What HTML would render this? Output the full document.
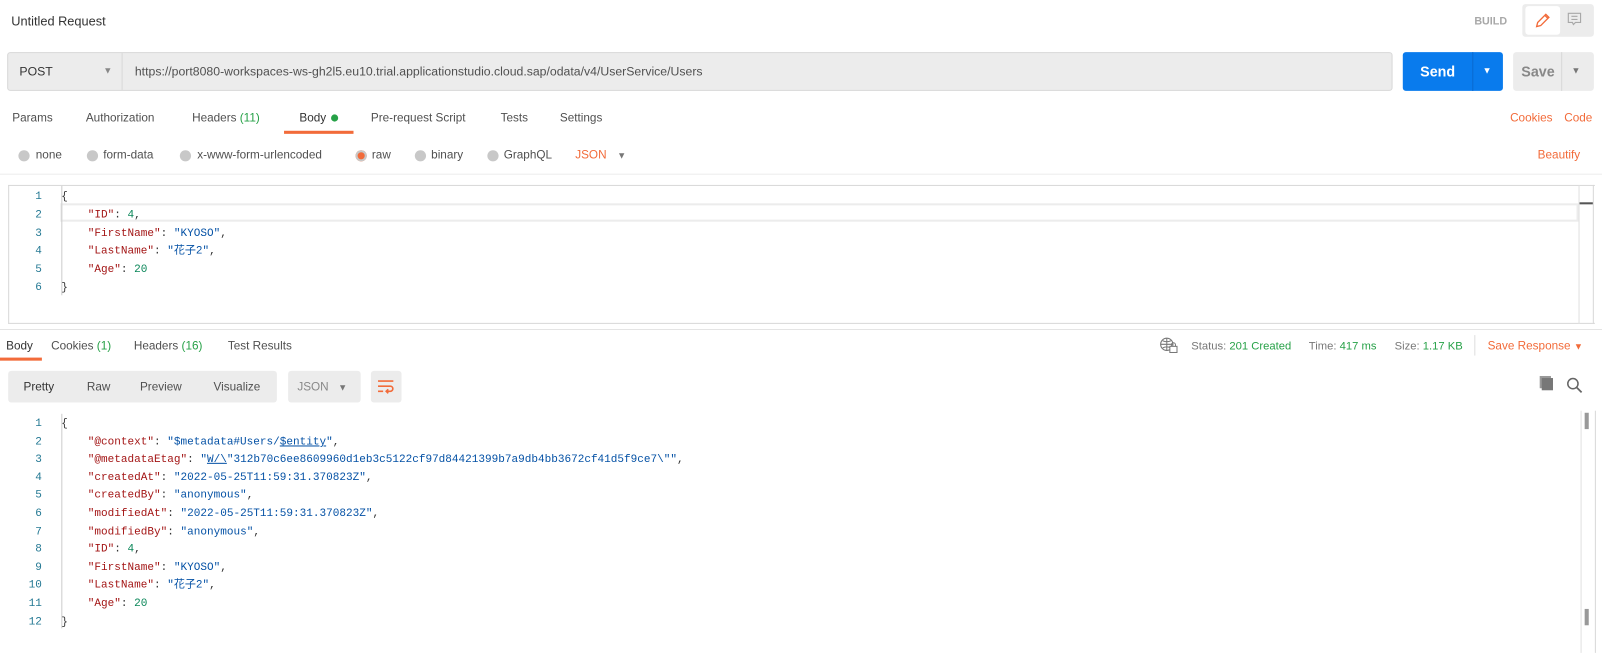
<!DOCTYPE html>
<html><head><meta charset="utf-8"><style>
*{margin:0;padding:0;box-sizing:border-box}
body{width:1602px;height:639px;background:#fff;overflow:hidden}
#w{position:relative;width:1568px;height:626px;transform:scale(1.0217);transform-origin:0 0;font-family:"Liberation Sans","Noto Sans CJK JP",sans-serif;font-size:11.5px;color:#505050}
.a{position:absolute;white-space:nowrap}
.t{margin-top:2px}
.o{color:#f26b3a}.g{color:#26a147}
.code{font-family:"Liberation Mono","Noto Sans CJK JP",monospace;font-size:10.8px;line-height:14px}
.code>div{margin-top:2px}
.ln{position:absolute;width:34px;text-align:right;color:#237893;line-height:14px}
.cl{position:absolute;left:60px;color:#333;white-space:pre;line-height:14px;height:14px}
.k{color:#a31515}.s{color:#0451a5}.n{color:#098658}
.rad{position:absolute;width:11px;height:11px;border-radius:50%;background:#c8c8c8;top:147px}
</style></head><body><div id="w">
<div class="a" style="left:11px;top:14px;font-size:12.5px;color:#333">Untitled Request</div>
<div class="a" style="left:1443px;top:15px;font-size:10.5px;font-weight:bold;color:#a8a8a8">BUILD</div>
<div class="a" style="left:1490px;top:4px;width:70px;height:32px;background:#ececec;border-radius:3px"></div>
<div class="a" style="left:1493px;top:6px;width:34px;height:28px;background:#fff;border-radius:3px"></div>
<svg class="a" style="left:1501px;top:11px" width="18" height="18" viewBox="0 0 18 18"><path d="M3 15 L4 11 L12 3 L15 6 L7 14 Z M11 4 L14 7" fill="none" stroke="#f26b3a" stroke-width="1.3"/></svg>
<svg class="a" style="left:1533px;top:11px" width="16" height="16" viewBox="0 0 16 16"><path d="M2 2h12v9H9l-2 2-1-2H2Z M5 5h6 M5 8h6" fill="none" stroke="#a8a8a8" stroke-width="1.1"/></svg>

<div class="a" style="left:7px;top:51px;width:1356px;height:38px;background:#ececec;border:1px solid #d8d8d8;border-radius:3px"></div>
<div class="a" style="left:119px;top:52px;width:1px;height:36px;background:#d8d8d8"></div>
<div class="a" style="left:19px;top:63px;font-size:12px;color:#333">POST</div>
<div class="a" style="left:101px;top:64px;font-size:9px;color:#888">▼</div>
<div class="a" style="left:132px;top:63px;font-size:12px;color:#505050">https://port8080-workspaces-ws-gh2l5.eu10.trial.applicationstudio.cloud.sap/odata/v4/UserService/Users</div>
<div class="a" style="left:1373px;top:51px;width:98px;height:38px;background:#097bed;border-radius:3px"></div>
<div class="a" style="left:1441px;top:51px;width:1px;height:38px;background:#0a6ad0"></div>
<div class="a" style="left:1390px;top:62px;font-size:14px;font-weight:bold;color:#fff">Send</div>
<div class="a" style="left:1451px;top:64px;font-size:9px;color:#fff">▼</div>
<div class="a" style="left:1481px;top:51px;width:79px;height:38px;background:#ececec;border-radius:3px"></div>
<div class="a" style="left:1528px;top:51px;width:1px;height:38px;background:#d8d8d8"></div>
<div class="a" style="left:1489px;top:62px;font-size:14px;font-weight:bold;color:#888">Save</div>
<div class="a" style="left:1538px;top:64px;font-size:9px;color:#777">▼</div>

<div class="a t" style="left:12px;top:108px">Params</div>
<div class="a t" style="left:84px;top:108px">Authorization</div>
<div class="a t" style="left:188px;top:108px">Headers <span class="g">(11)</span></div>
<div class="a t" style="left:293px;top:108px;color:#333">Body <span style="display:inline-block;width:7px;height:7px;border-radius:50%;background:#26a147;margin-left:2px"></span></div>
<div class="a" style="left:278px;top:128px;width:68px;height:3px;background:#f26b3a"></div>
<div class="a t" style="left:363px;top:108px">Pre-request Script</div>
<div class="a t" style="left:490px;top:108px">Tests</div>
<div class="a t" style="left:548px;top:108px">Settings</div>
<div class="a o t" style="left:1478px;top:108px">Cookies</div>
<div class="a o t" style="left:1531px;top:108px">Code</div>

<div class="rad" style="left:18px"></div><div class="a" style="left:35px;top:146px">none</div>
<div class="rad" style="left:85px"></div><div class="a" style="left:101px;top:146px">form-data</div>
<div class="rad" style="left:176px"></div><div class="a" style="left:193px;top:146px">x-www-form-urlencoded</div>
<div class="rad" style="left:348px;background:#f26b3a;box-shadow:inset 0 0 0 2px #c8c8c8"></div><div class="a" style="left:364px;top:146px">raw</div>
<div class="rad" style="left:406px"></div><div class="a" style="left:422px;top:146px">binary</div>
<div class="rad" style="left:477px"></div><div class="a" style="left:493px;top:146px">GraphQL</div>
<div class="a o" style="left:563px;top:146px">JSON</div>
<div class="a" style="left:604px;top:147px;font-size:9px;color:#777">▼</div>
<div class="a o" style="left:1505px;top:146px">Beautify</div>
<div class="a" style="left:0;top:170px;width:1568px;height:1px;background:#ececec"></div>

<div class="a" style="left:8px;top:181px;width:1553px;height:136px;border:1px solid #d8d8d8;border-right:none"></div>
<div class="a" style="left:1545px;top:181px;width:15px;height:136px;border-left:1px solid #e0e0e0;border-right:1px solid #d8d8d8"></div>
<div class="a" style="left:1546px;top:198px;width:13px;height:2px;background:#555"></div>
<div class="a" style="left:59px;top:199px;width:1486px;height:18px;border:2px solid #ececec"></div>
<div class="a" style="left:60px;top:182px;width:1px;height:107px;background:#ccc"></div>
<div class="code">
<div class="ln" style="left:7px;top:184px">1</div><div class="cl" style="top:184px">{</div>
<div class="ln" style="left:7px;top:202px">2</div><div class="cl" style="top:202px">    <span class="k">"ID"</span>: <span class="n">4</span>,</div>
<div class="ln" style="left:7px;top:220px">3</div><div class="cl" style="top:220px">    <span class="k">"FirstName"</span>: <span class="s">"KYOSO"</span>,</div>
<div class="ln" style="left:7px;top:237px">4</div><div class="cl" style="top:237px">    <span class="k">"LastName"</span>: <span class="s">"花子2"</span>,</div>
<div class="ln" style="left:7px;top:255px">5</div><div class="cl" style="top:255px">    <span class="k">"Age"</span>: <span class="n">20</span></div>
<div class="ln" style="left:7px;top:273px">6</div><div class="cl" style="top:273px">}</div>
</div>
<div class="a" style="left:0;top:322px;width:1568px;height:1px;background:#e4e4e4"></div>

<div class="a t" style="left:6px;top:331px;color:#333">Body</div>
<div class="a" style="left:0;top:350px;width:41px;height:3px;background:#f26b3a"></div>
<div class="a t" style="left:50px;top:331px">Cookies <span class="g">(1)</span></div>
<div class="a t" style="left:131px;top:331px">Headers <span class="g">(16)</span></div>
<div class="a t" style="left:223px;top:331px">Test Results</div>
<svg class="a" style="left:1135px;top:330px" width="18" height="16" viewBox="0 0 18 16"><circle cx="7" cy="7" r="6" fill="none" stroke="#777" stroke-width="1.1"/><path d="M1 7h12 M7 1v12 M3 3.5q4 2 8 0 M3 10.5q4-2 8 0" fill="none" stroke="#777" stroke-width="1"/><rect x="10" y="9" width="7" height="6" fill="#fff" stroke="#777"/><path d="M11.5 9V7.5a2 2 0 0 1 4 0V9" fill="none" stroke="#777"/></svg>
<div class="a" style="left:1166px;top:333px;font-size:11px;color:#777">Status: <span class="g">201 Created</span></div>
<div class="a" style="left:1281px;top:333px;font-size:11px;color:#777">Time: <span class="g">417 ms</span></div>
<div class="a" style="left:1365px;top:333px;font-size:11px;color:#777">Size: <span class="g">1.17 KB</span></div>
<div class="a" style="left:1443px;top:328px;width:1px;height:20px;background:#ddd"></div>
<div class="a o t" style="left:1456px;top:331px">Save Response <span style="font-size:9px">▼</span></div>

<div class="a" style="left:8px;top:363px;width:263px;height:31px;background:#ececec;border-radius:3px"></div>
<div class="a" style="left:23px;top:373px;color:#333">Pretty</div>
<div class="a" style="left:85px;top:373px">Raw</div>
<div class="a" style="left:137px;top:373px">Preview</div>
<div class="a" style="left:209px;top:373px">Visualize</div>
<div class="a" style="left:282px;top:363px;width:71px;height:31px;background:#ececec;border-radius:3px"></div>
<div class="a" style="left:291px;top:373px;color:#888">JSON</div>
<div class="a" style="left:331px;top:374px;font-size:9px;color:#777">▼</div>
<div class="a" style="left:363px;top:363px;width:30px;height:31px;background:#ececec;border-radius:3px"></div>
<svg class="a" style="left:369px;top:370px" width="18" height="16" viewBox="0 0 18 16"><path d="M1 3h15 M1 8h12a2.5 2.5 0 0 1 0 5H9 M11 11l-2 2 2 2 M1 13h5" fill="none" stroke="#f26b3a" stroke-width="1.6"/></svg>
<div class="a" style="left:1509px;top:370px;width:11px;height:12px;background:#777;box-shadow:-2px -2px 0 0 #999"></div>
<svg class="a" style="left:1533px;top:369px" width="16" height="16" viewBox="0 0 16 16"><circle cx="6.5" cy="6.5" r="5" fill="none" stroke="#666" stroke-width="1.5"/><path d="M10 10l5 5" stroke="#666" stroke-width="1.7"/></svg>

<div class="a" style="left:1547px;top:402px;width:15px;height:237px;border-left:1px solid #e0e0e0;border-right:1px solid #d8d8d8"></div>
<div class="a" style="left:1551px;top:404px;width:4px;height:16px;background:#999"></div>
<div class="a" style="left:1551px;top:596px;width:4px;height:16px;background:#999"></div>
<div class="a" style="left:60px;top:405px;width:1px;height:210px;background:#ccc"></div>
<div class="code">
<div class="ln" style="left:7px;top:406px">1</div><div class="cl" style="top:406px">{</div>
<div class="ln" style="left:7px;top:424px">2</div><div class="cl" style="top:424px">    <span class="k">"@context"</span>: <span class="s">"$metadata#Users/<u>$entity</u>"</span>,</div>
<div class="ln" style="left:7px;top:441px">3</div><div class="cl" style="top:441px">    <span class="k">"@metadataEtag"</span>: <span class="s">"<u>W/\</u>"312b70c6ee8609960d1eb3c5122cf97d84421399b7a9db4bb3672cf41d5f9ce7\""</span>,</div>
<div class="ln" style="left:7px;top:459px">4</div><div class="cl" style="top:459px">    <span class="k">"createdAt"</span>: <span class="s">"2022-05-25T11:59:31.370823Z"</span>,</div>
<div class="ln" style="left:7px;top:476px">5</div><div class="cl" style="top:476px">    <span class="k">"createdBy"</span>: <span class="s">"anonymous"</span>,</div>
<div class="ln" style="left:7px;top:494px">6</div><div class="cl" style="top:494px">    <span class="k">"modifiedAt"</span>: <span class="s">"2022-05-25T11:59:31.370823Z"</span>,</div>
<div class="ln" style="left:7px;top:512px">7</div><div class="cl" style="top:512px">    <span class="k">"modifiedBy"</span>: <span class="s">"anonymous"</span>,</div>
<div class="ln" style="left:7px;top:529px">8</div><div class="cl" style="top:529px">    <span class="k">"ID"</span>: <span class="n">4</span>,</div>
<div class="ln" style="left:7px;top:547px">9</div><div class="cl" style="top:547px">    <span class="k">"FirstName"</span>: <span class="s">"KYOSO"</span>,</div>
<div class="ln" style="left:7px;top:564px">10</div><div class="cl" style="top:564px">    <span class="k">"LastName"</span>: <span class="s">"花子2"</span>,</div>
<div class="ln" style="left:7px;top:582px">11</div><div class="cl" style="top:582px">    <span class="k">"Age"</span>: <span class="n">20</span></div>
<div class="ln" style="left:7px;top:600px">12</div><div class="cl" style="top:600px">}</div>
</div>
</div></body></html>
